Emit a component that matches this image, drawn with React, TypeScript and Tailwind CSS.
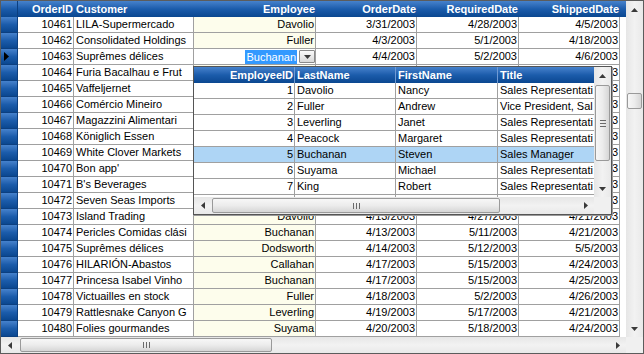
import React from 'react';

type Row = [string, string, string, string, string, string];

// customer names are shown as the grid clips them (whole characters only)
const ORDERS: Row[] = [
  ['10461', 'LILA-Supermercado', 'Davolio', '3/31/2003', '4/28/2003', '4/5/2003'],
  ['10462', 'Consolidated Holdings', 'Fuller', '4/3/2003', '5/1/2003', '4/18/2003'],
  ['10463', 'Suprêmes délices', 'Buchanan', '4/4/2003', '5/2/2003', '4/6/2003'],
  ['10464', 'Furia Bacalhau e Frut', 'Peacock', '4/4/2003', '5/2/2003', '4/14/2003'],
  ['10465', 'Vaffeljernet', 'Suyama', '4/5/2003', '5/3/2003', '4/14/2003'],
  ['10466', 'Comércio Mineiro', 'Peacock', '4/6/2003', '5/4/2003', '4/13/2003'],
  ['10467', 'Magazzini Alimentari', 'Callahan', '4/6/2003', '5/4/2003', '4/11/2003'],
  ['10468', 'Königlich Essen', 'Leverling', '4/7/2003', '5/5/2003', '4/12/2003'],
  ['10469', 'White Clover Markets', 'Davolio', '4/10/2003', '5/8/2003', '4/14/2003'],
  ['10470', "Bon app'", 'Peacock', '4/11/2003', '5/9/2003', '4/14/2003'],
  ['10471', "B's Beverages", 'Fuller', '4/11/2003', '5/9/2003', '4/18/2003'],
  ['10472', 'Seven Seas Imports', 'King', '4/12/2003', '5/10/2003', '4/19/2003'],
  ['10473', 'Island Trading', 'Davolio', '4/13/2003', '4/27/2003', '4/21/2003'],
  ['10474', 'Pericles Comidas clási', 'Buchanan', '4/13/2003', '5/11/2003', '4/21/2003'],
  ['10475', 'Suprêmes délices', 'Dodsworth', '4/14/2003', '5/12/2003', '5/5/2003'],
  ['10476', 'HILARIÓN-Abastos', 'Callahan', '4/17/2003', '5/15/2003', '4/24/2003'],
  ['10477', 'Princesa Isabel Vinho', 'Buchanan', '4/17/2003', '5/15/2003', '4/25/2003'],
  ['10478', 'Victuailles en stock', 'Fuller', '4/18/2003', '5/2/2003', '4/26/2003'],
  ['10479', 'Rattlesnake Canyon G', 'Leverling', '4/19/2003', '5/17/2003', '4/21/2003'],
  ['10480', 'Folies gourmandes', 'Suyama', '4/20/2003', '5/18/2003', '4/24/2003'],
];

const EMPLOYEES: [string, string, string, string][] = [
  ['1', 'Davolio', 'Nancy', 'Sales Representati'],
  ['2', 'Fuller', 'Andrew', 'Vice President, Sal'],
  ['3', 'Leverling', 'Janet', 'Sales Representati'],
  ['4', 'Peacock', 'Margaret', 'Sales Representati'],
  ['5', 'Buchanan', 'Steven', 'Sales Manager'],
  ['6', 'Suyama', 'Michael', 'Sales Representati'],
  ['7', 'King', 'Robert', 'Sales Representati'],
  ['8', 'Callahan', 'Laura', 'Inside Sales Coordi'],
];

const HEADERS = ['OrderID', 'Customer', 'Employee', 'OrderDate', 'RequiredDate', 'ShippedDate'];

// widths include the right grid line
const COL_W = ['w-[56px]', 'w-[120px]', 'w-[122px]', 'w-[101px]', 'w-[102px]', 'w-[101px]'];
const COL_ALIGN = ['text-right pr-[1px]', 'text-left pl-[2px]', 'text-right pr-[1px]', 'text-right pr-[1px]', 'text-right pr-[1px]', 'text-right pr-[1px]'];
const COL_BG = ['bg-white', 'bg-white', 'bg-[#fdfdec]', 'bg-white', 'bg-white', 'bg-white'];

const POP_W = ['w-[101px]', 'w-[101px]', 'w-[102px]', 'w-[100px]'];
const POP_ALIGN = ['text-right pr-[1px]', 'text-left pl-[2px]', 'text-left pl-[2px]', 'text-left pl-[2px]'];
const POP_HEAD = ['EmployeeID', 'LastName', 'FirstName', 'Title'];

const headBg = 'bg-gradient-to-b from-[#4682cc] via-[#1b5cab] to-[#0a4790]';

const Tri: React.FC<{ dir: 'up' | 'down' | 'left' | 'right' }> = ({ dir }) => {
  const pts = {
    up: '0,4 7,4 3.5,0',
    down: '0,0 7,0 3.5,4',
    left: '4,0 4,7 0,3.5',
    right: '0,0 0,7 4,3.5',
  }[dir];
  const vertical = dir === 'up' || dir === 'down';
  return (
    <svg width={vertical ? 7 : 4} height={vertical ? 4 : 7} viewBox={vertical ? '0 0 7 4' : '0 0 4 7'}>
      <polygon points={pts} fill="#3a3a3a" />
    </svg>
  );
};

const GripV: React.FC = () => (
  <svg width="7" height="6" viewBox="0 0 7 6">
    <rect x="0" y="0" width="1" height="6" fill="#6a6a6a" />
    <rect x="3" y="0" width="1" height="6" fill="#6a6a6a" />
    <rect x="6" y="0" width="1" height="6" fill="#6a6a6a" />
  </svg>
);

const GripH: React.FC = () => (
  <svg width="6" height="7" viewBox="0 0 6 7">
    <rect x="0" y="0" width="6" height="1" fill="#6a6a6a" />
    <rect x="0" y="3" width="6" height="1" fill="#6a6a6a" />
    <rect x="0" y="6" width="6" height="1" fill="#6a6a6a" />
  </svg>
);

const thumbH = 'rounded-[2px] border border-[#9a9a9a] bg-gradient-to-b from-[#f7f7f7] via-[#ececec] to-[#d6d6d6]';
const thumbV = 'rounded-[2px] border border-[#9a9a9a] bg-gradient-to-r from-[#f7f7f7] via-[#ececec] to-[#d6d6d6]';

const App: React.FC = () => {
  return (
    <div className="relative flex h-[354px] w-[644px] flex-col overflow-hidden border border-[#5c5c5c] bg-white font-['Liberation_Sans',Arial,sans-serif] text-[11px] text-black">
      <div className="flex h-[336px]">
        {/* grid */}
        <div className="flex flex-1 flex-col overflow-hidden">
          <div className="flex h-[16px] shrink-0">
            <div className={`h-[16px] w-[17px] shrink-0 border-r border-[#0b3f80] ${headBg}`} />
            {HEADERS.map((h, i) => (
              <div
                key={h}
                className={`h-[16px] shrink-0 overflow-hidden whitespace-nowrap font-bold leading-[16px] text-white ${COL_W[i]} ${COL_ALIGN[i]} ${headBg}`}
              >
                {h}
              </div>
            ))}
            <div className={`h-[16px] flex-1 ${headBg}`} />
          </div>
          {ORDERS.map((r, ri) => (
            <div key={r[0]} className="flex h-[16px] shrink-0">
              <div className={`flex h-[16px] w-[17px] shrink-0 items-center border-b border-r border-[#0b3f80] pl-[3px] ${headBg}`}>
                {ri === 2 && (
                  <svg width="5" height="9" viewBox="0 0 5 9">
                    <polygon points="0,0 5,4.5 0,9" fill="#000" />
                  </svg>
                )}
              </div>
              {r.map((c, ci) =>
                ri === 2 && ci === 2 ? (
                  <div
                    key={ci}
                    className={`flex h-[16px] shrink-0 items-center justify-end border-b border-r border-[#a0a0a0] bg-white ${COL_W[ci]}`}
                  >
                    <span className="bg-[#3399ff] px-[1px] leading-[14px] text-white">{c}</span>
                    <div className="ml-[2px] flex h-[13px] w-[16px] items-center justify-center rounded-[1px] border border-[#8a8a8a] bg-gradient-to-b from-[#fafafa] to-[#d9d9d9]">
                      <Tri dir="down" />
                    </div>
                  </div>
                ) : (
                  <div
                    key={ci}
                    className={`h-[16px] shrink-0 overflow-hidden whitespace-nowrap border-b border-r border-[#a0a0a0] leading-[15px] ${COL_W[ci]} ${COL_ALIGN[ci]} ${COL_BG[ci]}`}
                  >
                    {c}
                  </div>
                )
              )}
              <div className="h-[16px] flex-1 bg-white" />
            </div>
          ))}
        </div>
        {/* vertical scrollbar */}
        <div className="flex w-[17px] shrink-0 flex-col bg-gradient-to-r from-[#e6e6e6] via-[#f2f2f2] to-[#e9e9e9]">
          <div className="flex h-[17px] items-center justify-center">
            <Tri dir="up" />
          </div>
          <div className="flex flex-1 flex-col px-[1px]">
            <div className="h-[75px]" />
            <div className={`h-[16px] ${thumbV}`} />
          </div>
          <div className="flex h-[17px] items-center justify-center">
            <Tri dir="down" />
          </div>
        </div>
      </div>
      {/* horizontal scrollbar */}
      <div className="flex h-[16px] shrink-0">
        <div className="flex flex-1 items-center bg-gradient-to-b from-[#e6e6e6] via-[#f2f2f2] to-[#e9e9e9]">
          <div className="flex h-[16px] w-[17px] items-center justify-center">
            <Tri dir="left" />
          </div>
          <div className={`ml-[2px] flex h-[14px] w-[252px] items-center justify-center ${thumbH}`}>
            <GripV />
          </div>
          <div className="flex-1" />
          <div className="flex h-[16px] w-[17px] items-center justify-center">
            <Tri dir="right" />
          </div>
        </div>
        <div className="w-[17px] bg-[#f0f0f0]" />
      </div>

      {/* employee drop-down list */}
      <div className="absolute left-[192px] top-[65px] flex h-[149px] w-[419px] flex-col border border-[#555555] bg-white shadow-[1px_1px_0_#9a9a9a]">
        <div className="flex h-[130px] shrink-0">
          <div className="flex flex-1 flex-col overflow-hidden">
            <div className="flex h-[16px] shrink-0">
              {POP_HEAD.map((h, i) => (
                <div
                  key={h}
                  className={`h-[16px] shrink-0 overflow-hidden whitespace-nowrap border-r border-[#6f9ad4] font-bold leading-[16px] text-white ${POP_W[i]} ${POP_ALIGN[i]} ${headBg}`}
                >
                  {h}
                </div>
              ))}
            </div>
            {EMPLOYEES.map((e) => (
              <div key={e[0]} className={`flex h-[16px] shrink-0 ${e[0] === '5' ? 'bg-[#aed5f5]' : 'bg-white'}`}>
                {e.map((c, ci) => (
                  <div
                    key={ci}
                    className={`h-[16px] shrink-0 overflow-hidden whitespace-nowrap border-b border-r border-[#a0a0a0] leading-[15px] ${POP_W[ci]} ${POP_ALIGN[ci]}`}
                  >
                    {c}
                  </div>
                ))}
              </div>
            ))}
          </div>
          <div className="flex w-[17px] shrink-0 flex-col bg-gradient-to-r from-[#e6e6e6] via-[#f2f2f2] to-[#e9e9e9]">
            <div className="flex h-[17px] items-center justify-center">
              <Tri dir="up" />
            </div>
            <div className="flex flex-1 flex-col px-[1px]">
              <div className="h-[1px]" />
              <div className={`flex h-[76px] items-center justify-center ${thumbV}`}>
                <GripH />
              </div>
            </div>
            <div className="flex h-[17px] items-center justify-center">
              <Tri dir="down" />
            </div>
          </div>
        </div>
        <div className="flex h-[17px] shrink-0">
          <div className="flex flex-1 items-center bg-gradient-to-b from-[#e6e6e6] via-[#f2f2f2] to-[#e9e9e9]">
            <div className="flex h-[17px] w-[17px] items-center justify-center">
              <Tri dir="left" />
            </div>
            <div className={`ml-[1px] flex h-[15px] w-[288px] items-center justify-center ${thumbH}`}>
              <GripV />
            </div>
            <div className="flex-1" />
            <div className="flex h-[17px] w-[17px] items-center justify-center">
              <Tri dir="right" />
            </div>
          </div>
          <div className="w-[17px] bg-[#f0f0f0]" />
        </div>
      </div>
    </div>
  );
};

export default App;
